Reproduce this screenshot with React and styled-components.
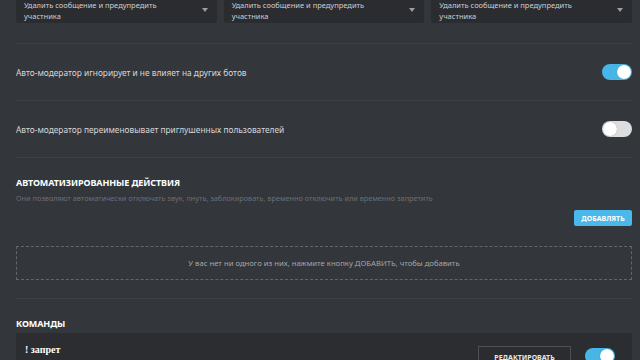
import React from 'react'
import styled, { createGlobalStyle } from 'styled-components'

const GlobalStyle = createGlobalStyle`
  body {
    margin: 0;
    background: #33363b;
    font-family: 'Noto Sans', 'Open Sans', sans-serif;
    color: #dcddde;
    overflow: hidden;
  }
`

const Page = styled.div`
  width: 640px;
  height: 360px;
  padding: 0 8px 0 16px;
  box-sizing: border-box;
  overflow: hidden;
`

const SelectRow = styled.div`
  display: grid;
  grid-template-columns: repeat(3, 1fr);
  gap: 7px;
`

const Select = styled.div`
  background: #2a2c30;
  display: flex;
  align-items: flex-start;
  justify-content: space-between;
  padding: 0 9px 1px 8px;
  font-size: 7.5px;
  line-height: 11px;
  color: #cdcfd2;
  border-radius: 0 0 3px 3px;
`

const SelectText = styled.div`
  width: 140px;
`

const Caret = styled.span`
  margin-top: 8px;
  width: 0;
  height: 0;
  border-left: 3px solid transparent;
  border-right: 3px solid transparent;
  border-top: 4px solid #9a9da2;
`

const Divider = styled.hr`
  border: none;
  border-top: 1px solid #3d4045;
  margin: ${p => p.$m || '20px 0 0'};
`

const OptionRow = styled.div`
  display: flex;
  align-items: center;
  justify-content: space-between;
  height: 56px;
  font-size: 8.35px;
  color: #d6d7d9;
`

const Toggle = styled.div`
  width: 30px;
  height: 16px;
  border-radius: 8px;
  background: ${p => (p.$on ? '#47b5e6' : '#dcdddf')};
  display: flex;
  align-items: center;
  justify-content: ${p => (p.$on ? 'flex-end' : 'flex-start')};
  padding: 0 1px;
  box-sizing: border-box;
  flex-shrink: 0;
`

const Knob = styled.div`
  width: 14px;
  height: 14px;
  border-radius: 50%;
  background: #ffffff;
  box-shadow: 0 0 1px rgba(0, 0, 0, 0.35);
`

const Section = styled.div`
  padding-top: 19px;
`

const Heading = styled.h2`
  margin: 0;
  font-size: 9px;
  line-height: 12px;
  font-weight: 700;
  color: #ffffff;
  letter-spacing: -0.1px;
`

const Sub = styled.p`
  margin: 4px 0 0;
  font-size: 7.3px;
  color: #6c7076;
`

const ButtonRow = styled.div`
  display: flex;
  justify-content: flex-end;
  margin-top: 7px;
`

const AddButton = styled.button`
  background: #4ab8ea;
  border: none;
  color: #ffffff;
  font-family: inherit;
  font-size: 7px;
  font-weight: 700;
  width: 58px;
  height: 16px;
  padding: 0;
  border-radius: 2px;
`

const Empty = styled.div`
  margin-top: 20px;
  height: 32px;
  border: 1px dashed #63666b;
  display: flex;
  align-items: center;
  justify-content: center;
  font-size: 7.7px;
  color: #a3a6aa;
`

const CommandCard = styled.div`
  margin-top: 3px;
  background: #2b2d31;
  height: 40px;
  display: flex;
  align-items: flex-start;
  padding: 11px 17px 0 9px;
  box-sizing: border-box;
`

const CommandName = styled.div`
  flex: 1;
  font-family: 'Liberation Serif', 'DejaVu Serif', serif;
  font-weight: 700;
  font-size: 10px;
  color: #ffffff;
`

const EditButton = styled.button`
  background: #2a2c30;
  border: 1px solid #4d5055;
  color: #e8e9ea;
  font-family: inherit;
  font-size: 7px;
  font-weight: 700;
  width: 93px;
  height: 22px;
  padding: 0;
  margin: 2px 14px 0 0;
`

const ToggleWrap = styled.div`
  padding-top: 4px;
`

export default function App() {
  const selects = [1, 2, 3]
  return (
    <>
      <GlobalStyle />
      <Page>
        <SelectRow>
          {selects.map(i => (
            <Select key={i}>
              <SelectText>Удалить сообщение и предупредить участника</SelectText>
              <Caret />
            </Select>
          ))}
        </SelectRow>
        <Divider />
        <OptionRow>
          <span>Авто-модератор игнорирует и не влияет на других ботов</span>
          <Toggle $on><Knob /></Toggle>
        </OptionRow>
        <Divider $m="0" />
        <OptionRow>
          <span>Авто-модератор переименовывает приглушенных пользователей</span>
          <Toggle><Knob /></Toggle>
        </OptionRow>
        <Divider $m="0" />
        <Section>
          <Heading>АВТОМАТИЗИРОВАННЫЕ ДЕЙСТВИЯ</Heading>
          <Sub>Они позволяют автоматически отключать звук, пнуть, заблокировать, временно отключить или временно запретить</Sub>
          <ButtonRow>
            <AddButton>ДОБАВЛЯТЬ</AddButton>
          </ButtonRow>
          <Empty>У вас нет ни одного из них, нажмите кнопку ДОБАВИТЬ, чтобы добавить</Empty>
        </Section>
        <Divider $m="18px 0 0" />
        <Section>
          <Heading>КОМАНДЫ</Heading>
          <CommandCard>
            <CommandName>! запрет</CommandName>
            <EditButton>РЕДАКТИРОВАТЬ</EditButton>
            <ToggleWrap>
              <Toggle $on><Knob /></Toggle>
            </ToggleWrap>
          </CommandCard>
        </Section>
      </Page>
    </>
  )
}
